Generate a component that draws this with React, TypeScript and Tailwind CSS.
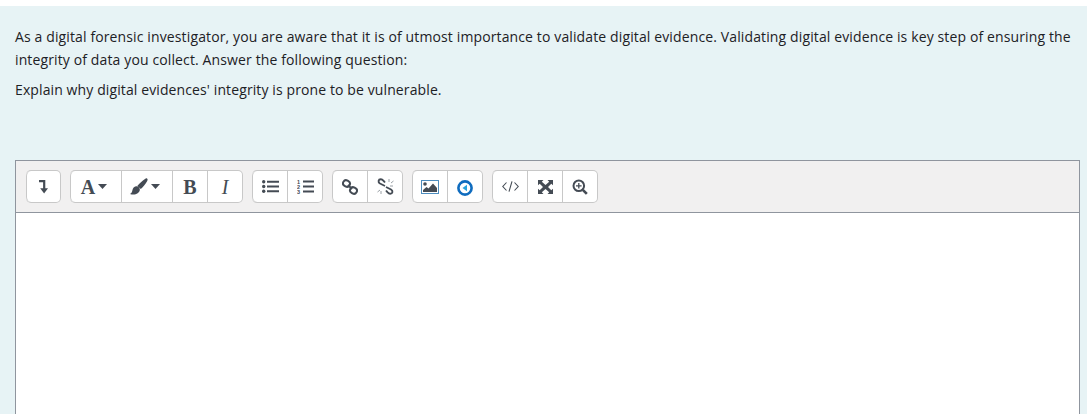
import React from 'react';

const ink = '#444b54';

const Btn = ({ w = 'w-[35px]', children }: { w?: string; children: React.ReactNode }) => (
  <div className={`${w} h-full flex items-center justify-center border-l border-[#c8c8c8] first:rounded-l-[5px]`}>{children}</div>
);

const Group = ({ children }: { children: React.ReactNode }) => (
  <div className="flex h-[33px] bg-white border-y border-r border-[#c8c8c8] rounded-[5px]">{children}</div>
);

const Caret = () => (
  <svg width="9" height="5" viewBox="0 0 9 5"><path d="M0 0h9L4.5 5z" fill={ink} /></svg>
);

const Serif = ({ className, children }: { className?: string; children: string }) => (
  <span className={`font-['Liberation_Serif',serif] text-[20px] leading-none text-[#444b54] ${className ?? ''}`}>{children}</span>
);

export default function App() {
  return (
    <div className="h-[414px] w-[1087px] overflow-hidden bg-white pt-[6px] font-['Open_Sans',sans-serif]">
      <div className="h-[408px] bg-[#e7f3f5] pl-[15px] pr-[7px] pt-[19px] text-[14px] leading-[23px] text-[#1d2125]">
        <p className="w-[1065px] tracking-[0.125px]">
          As a digital forensic investigator, you are aware that it is of utmost importance to validate digital evidence. Validating digital evidence is key step of ensuring the integrity of data you collect. Answer the following question:
        </p>
        <p className="mt-[7px] tracking-[0.11px]">Explain why digital evidences' integrity is prone to be vulnerable.</p>

        <div className="mt-[59px] border border-[#8f959e] border-b-0 h-[260px] bg-white">
          <div className="h-[52px] bg-[#f1f0f0] border-b border-[#8f959e] pl-[10px] pt-[9px] flex gap-[9px]">
            <Group>
              <Btn w="w-[34px]">
                <svg width="9" height="14" viewBox="0 0 9 14"><path d="M0 1.200h5.200V9" fill="none" stroke={ink} strokeWidth="2.200" /><path d="M1.200 8.300H9L5.100 13.500z" fill={ink} /></svg>
              </Btn>
            </Group>
            <Group>
              <Btn w="w-[51px]">
                <span className="mr-[4px] flex items-center gap-[3px]"><Serif className="font-bold">A</Serif><Caret /></span>
              </Btn>
              <Btn w="w-[51px]">
                <span className="mr-[5px] flex items-center gap-[3px]">
                  <svg width="18" height="17" viewBox="0 0 18 17"><path d="M17 .6c.9.6.7 1.600.2 2.500C15.500 6 13.400 8.900 10.800 11L7.300 8C9.600 5.200 12.200 2.900 15 .9c.8-.6 1.500-.8 2-.3z" fill={ink} /><path d="M6 8.300c2.300-.3 4.100 1.400 3.800 3.600C9.400 15.400 4.800 17.500 0 15.900c1.700-.7 2-2 2.400-3.600C2.900 10.200 4.100 8.600 6 8.300z" fill={ink} /></svg>
                  <Caret />
                </span>
              </Btn>
              <Btn><Serif className="font-bold">B</Serif></Btn>
              <Btn><Serif className="italic">I</Serif></Btn>
            </Group>
            <Group>
              <Btn>
                <svg width="17" height="13" viewBox="0 0 17 13" fill={ink}><circle cx="1.700" cy="1.800" r="1.700" /><circle cx="1.700" cy="6.500" r="1.700" /><circle cx="1.700" cy="11.200" r="1.700" /><path d="M5 .8h12v2H5zM5 5.500h12v2H5zM5 10.200h12v2H5z" /></svg>
              </Btn>
              <Btn>
                <svg width="17" height="15" viewBox="0 0 17 15" fill={ink}><path d="M6 1.500h11v2H6zM6 6.500h11v2H6zM6 11.500h11v2H6z" /><text x="0" y="4.500" fontSize="5.500" fontWeight="700" fontFamily="Liberation Sans">1</text><text x="0" y="9.500" fontSize="5.500" fontWeight="700" fontFamily="Liberation Sans">2</text><text x="0" y="14.500" fontSize="5.500" fontWeight="700" fontFamily="Liberation Sans">3</text></svg>
              </Btn>
            </Group>
            <Group>
              <Btn>
                <svg width="16" height="16" viewBox="0 0 16 16" fill="none" stroke={ink} strokeWidth="2"><rect x="1" y="1.500" width="7" height="6" rx="3" transform="rotate(30 4.500 4.500)" /><rect x="8" y="8.500" width="7" height="6" rx="3" transform="rotate(30 11.500 11.500)" /><path d="M6 6l4 4" /></svg>
              </Btn>
              <Btn>
                <svg width="17" height="17" viewBox="0 0 17 17" fill="none" stroke={ink} strokeWidth="1.900"><path d="M8 8L3 5.500C.8 4.200 1.200 1.200 3.800 1.200c1.200 0 2 .7 2.800 1.600l1.400 1.700" /><path d="M9 9l5 2.500c2.200 1.300 1.800 4.300-.8 4.300-1.200 0-2-.7-2.800-1.600L9 12.500" /><path d="M12 1v3M14 5l2.500-2M4 16v-3M3 12l-2.500 2M13 8h3" stroke="#9aa0a6" strokeWidth="1" /></svg>
              </Btn>
            </Group>
            <Group>
              <Btn>
                <svg width="18" height="14" viewBox="0 0 18 14"><rect x=".5" y=".5" width="17" height="13" fill="#fff" stroke="#4d8dbf" /><circle cx="4" cy="4" r="1.800" fill={ink} /><path d="M2 12V10L5.500 7l2 1.500L12 3.500 16 8v4z" fill={ink} /></svg>
              </Btn>
              <Btn>
                <svg className="mt-[3px]" width="16" height="16" viewBox="0 0 16 16"><circle cx="8" cy="8" r="6.600" fill="#fff" stroke="#0f6cbf" strokeWidth="2.600" /><path d="M10 4.800v6.400L5.500 8z" fill="#29a3dc" /></svg>
              </Btn>
            </Group>
            <Group>
              <Btn>
                <svg width="17" height="11" viewBox="0 0 17 11" fill="none" stroke={ink} strokeWidth="1.100"><path d="M4.500 1.500L.8 5.500l3.700 4M12.500 1.500l3.700 4-3.700 4M10 .3L7 10.700" /></svg>
              </Btn>
              <Btn>
                <svg width="15" height="14" viewBox="0 0 15 14" fill={ink}><path d="M0 0h5.500L3.800 1.700 7.500 5 11.200 1.700 9.500 0H15v5.300l-1.700-1.600L10 7l3.300 3.300L15 8.700V14H9.500l1.700-1.700L7.500 9l-3.700 3.300L5.500 14H0V8.700l1.700 1.600L5 7 1.700 3.700 0 5.300z" /></svg>
              </Btn>
              <Btn>
                <svg width="16" height="16" viewBox="0 0 16 16" fill="none" stroke={ink}><circle cx="6.800" cy="6.800" r="5.300" strokeWidth="2" /><path d="M10.800 10.800l4 4" strokeWidth="2.600" /><path d="M4 6.800h5.600M6.800 4v5.600" strokeWidth="1.300" /></svg>
              </Btn>
            </Group>
          </div>
          <div className="h-[200px] bg-white" />
        </div>
      </div>
    </div>
  );
}
